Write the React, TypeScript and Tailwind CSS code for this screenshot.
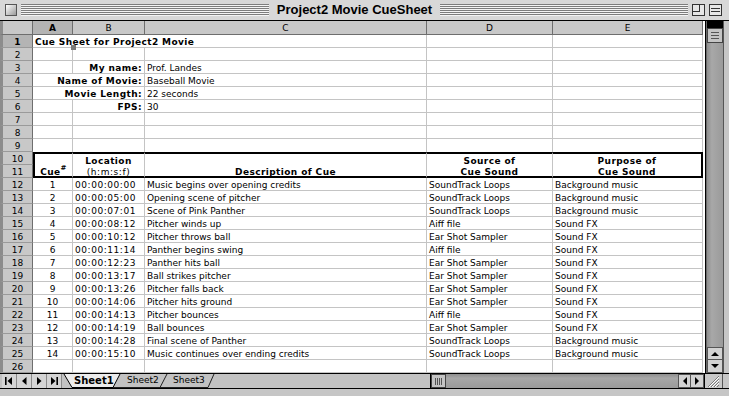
import type { ReactElement } from "react";

type Cell = { t?: string; align?: "l" | "c" | "r"; bold?: boolean; mono?: boolean };

const COL_W = ["w-[40px]", "w-[72px]", "w-[282px]", "w-[126px]", "w-[150px]"];
const COL_NAMES = ["A", "B", "C", "D", "E"];

const cues: [string, string, string, string, string][] = [
  ["1", "00:00:00:00", "Music begins over opening credits", "SoundTrack Loops", "Background music"],
  ["2", "00:00:05:00", "Opening scene of pitcher", "SoundTrack Loops", "Background music"],
  ["3", "00:00:07:01", "Scene of Pink Panther", "SoundTrack Loops", "Background music"],
  ["4", "00:00:08:12", "Pitcher winds up", "Aiff file", "Sound FX"],
  ["5", "00:00:10:12", "Pitcher throws ball", "Ear Shot Sampler", "Sound FX"],
  ["6", "00:00:11:14", "Panther begins swing", "Aiff file", "Sound FX"],
  ["7", "00:00:12:23", "Panther hits ball", "Ear Shot Sampler", "Sound FX"],
  ["8", "00:00:13:17", "Ball strikes pitcher", "Ear Shot Sampler", "Sound FX"],
  ["9", "00:00:13:26", "Pitcher falls back", "Ear Shot Sampler", "Sound FX"],
  ["10", "00:00:14:06", "Pitcher hits ground", "Ear Shot Sampler", "Sound FX"],
  ["11", "00:00:14:13", "Pitcher bounces", "Aiff file", "Sound FX"],
  ["12", "00:00:14:19", "Ball bounces", "Ear Shot Sampler", "Sound FX"],
  ["13", "00:00:14:28", "Final scene of Panther", "SoundTrack Loops", "Background music"],
  ["14", "00:00:15:10", "Music continues over ending credits", "SoundTrack Loops", "Background music"],
];

function infoRow(label: string, value: string): Cell[] {
  return [{}, { t: label, align: "r", bold: true }, { t: value }, {}, {}];
}

const rows: Cell[][] = [
  [{ t: "Cue Sheet for Project2 Movie", bold: true }, {}, {}, {}, {}],
  [{}, {}, {}, {}, {}],
  infoRow("My name:", "Prof. Landes"),
  infoRow("Name of Movie:", "Baseball Movie"),
  infoRow("Movie Length:", "22 seconds"),
  infoRow("FPS:", "30"),
  [{}, {}, {}, {}, {}],
  [{}, {}, {}, {}, {}],
  [{}, {}, {}, {}, {}],
  [
    {},
    { t: "Location", align: "c", bold: true },
    {},
    { t: "Source of", align: "c", bold: true },
    { t: "Purpose of", align: "c", bold: true },
  ],
  [
    { t: "Cue#", align: "c", bold: true },
    { t: "(h:m:s:f)", align: "c", mono: true },
    { t: "Description of Cue", align: "c", bold: true },
    { t: "Cue Sound", align: "c", bold: true },
    { t: "Cue Sound", align: "c", bold: true },
  ],
  ...cues.map((c) => [
    { t: c[0], align: "c" as const },
    { t: c[1], mono: true },
    { t: c[2] },
    { t: c[3] },
    { t: c[4] },
  ]),
  [{}, {}, {}, {}, {}],
];

function cellClass(row: number, col: number): string {
  const cls = [COL_W[col], "h-[13px] shrink-0 whitespace-nowrap px-[2px] pt-px leading-[12px] border-[#c4c4c4]"];
  // text that runs over the next cell hides the grid line between them
  const hideRight = (row === 1 && col < 2) || ((row === 4 || row === 5) && col === 0);
  if (col === 4 && (row === 10 || row === 11)) cls.push("border-r-2 border-r-black");
  else if (!hideRight) cls.push("border-r");
  if (row === 11) cls.push("border-b-2 border-b-black");
  else if (row !== 9 && row !== 10) cls.push("border-b");
  if (row === 10) cls.push("border-t-2 border-t-black");
  if (col === 0 && (row === 10 || row === 11)) cls.push("border-l-2 border-l-black");
  if (row === 1 && col === 0) cls.push("relative");
  return cls.join(" ");
}

function CellText({ c }: { c: Cell }): ReactElement | null {
  if (!c.t) return null;
  const weight = c.bold ? "font-bold tracking-[0.4px]" : c.mono ? "tracking-[0.55px]" : "";
  if (c.align === "r") {
    return (
      <div className="flex justify-end">
        <span className={"shrink-0 whitespace-nowrap " + weight}>{c.t}</span>
      </div>
    );
  }
  return (
    <div className={(c.align === "c" ? "text-center " : "text-left ") + weight}>
      {c.t === "Cue#" ? (
        <>
          Cue<sup className="text-[7px] align-[2px]">#</sup>
        </>
      ) : (
        c.t
      )}
    </div>
  );
}

function SheetRow({ cells, n }: { cells: Cell[]; n: number }): ReactElement {
  return (
    <div className="flex h-[13px]">
      <div
        className={
          n === 1
            ? "w-[33px] shrink-0 border-l-[3px] border-l-[#8c8c8c] border-r border-r-[#6e6e6e] border-b border-b-[#9a9a9a] bg-[#b4b4b4] pt-px text-center leading-[12px] font-bold"
            : "w-[33px] shrink-0 border-l-[3px] border-l-[#8c8c8c] border-r border-r-[#6e6e6e] border-b border-b-[#9a9a9a] bg-[#c8c8c8] pt-px text-center leading-[12px]"
        }
      >
        {n}
      </div>
      {cells.map((c, i) => (
        <div key={i} className={cellClass(n, i)}>
          <CellText c={c} />
          {n === 1 && i === 0 ? (
            <div className="absolute right-[-3px] bottom-[-3px] h-[5px] w-[5px] bg-[#7a7a7a]" />
          ) : null}
        </div>
      ))}
    </div>
  );
}

function Stripes(): ReactElement {
  return (
    <div className="h-[12px] flex-1 bg-[repeating-linear-gradient(to_bottom,#7d7d7d_0px,#7d7d7d_1px,#f4f4f4_1px,#f4f4f4_2px)]" />
  );
}

function Arrow({ dir }: { dir: "up" | "down" | "left" | "right" }): ReactElement {
  const pts = {
    up: "1,7 5,3 9,7",
    down: "1,3 5,7 9,3",
    left: "7,1 3,5 7,9",
    right: "3,1 7,5 3,9",
  }[dir];
  return (
    <svg width="10" height="10" viewBox="0 0 10 10">
      <polygon points={pts} fill="#000" />
    </svg>
  );
}

function NavButton({ kind }: { kind: "first" | "prev" | "next" | "last" }): ReactElement {
  return (
    <div className="flex h-[14px] w-[15px] shrink-0 items-center justify-center border-r border-[#8a8a8a] bg-[#d4d4d4]">
      <svg width="10" height="10" viewBox="0 0 10 10">
        {kind === "first" && (
          <>
            <rect x="1" y="1" width="1.6" height="8" fill="#000" />
            <polygon points="8,1 3.5,5 8,9" fill="#000" />
          </>
        )}
        {kind === "prev" && <polygon points="7.5,1 3,5 7.5,9" fill="#000" />}
        {kind === "next" && <polygon points="3,1 7.5,5 3,9" fill="#000" />}
        {kind === "last" && (
          <>
            <polygon points="2,1 6.5,5 2,9" fill="#000" />
            <rect x="7.4" y="1" width="1.6" height="8" fill="#000" />
          </>
        )}
      </svg>
    </div>
  );
}

export default function App(): ReactElement {
  return (
    <div className="flex h-[396px] w-[729px] flex-col overflow-hidden bg-[#c6c6c6] font-['DejaVu_Sans',sans-serif] text-[9px] text-black">
      {/* title bar */}
      <div className="flex h-[20px] shrink-0 items-center gap-[4px] bg-[#d8d8d8] pl-[5px] pr-[7px]">
        <div className="h-[12px] w-[12px] border border-[#555] bg-[linear-gradient(135deg,#ffffff,#9a9a9a)]" />
        <Stripes />
        <div className="px-[4px] font-['Liberation_Sans',sans-serif] text-[13px] font-bold leading-[16px]">
          Project2 Movie CueSheet
        </div>
        <Stripes />
        <div className="relative h-[12px] w-[13px] border border-[#333] bg-[#e6e6e6]">
          <div className="absolute left-0 top-0 h-[7px] w-[7px] border-b border-r border-[#333]" />
        </div>
        <div className="flex h-[12px] w-[13px] flex-col justify-center gap-[2px] border border-[#333] bg-[#e6e6e6] px-[1px]">
          <div className="h-px bg-[#333]" />
          <div className="h-px bg-[#333]" />
        </div>
      </div>

      {/* sheet + vertical scroll */}
      <div className="flex h-[353px] shrink-0 border-t border-black">
        <div className="w-[705px] shrink-0 bg-white">
          {/* column headers */}
          <div className="flex h-[14px]">
            <div className="w-[33px] shrink-0 border-l-[3px] border-l-[#8c8c8c] border-r border-r-[#6e6e6e] border-b border-b-[#6e6e6e] bg-[#c8c8c8]" />
            {COL_NAMES.map((c, i) => (
              <div
                key={c}
                className={
                  COL_W[i] +
                  (i === 0
                    ? " shrink-0 border-r border-b border-[#6e6e6e] bg-[#b4b4b4] pt-px text-center font-bold leading-[12px]"
                    : " shrink-0 border-r border-b border-[#6e6e6e] bg-[#c8c8c8] pt-px text-center leading-[12px]")
                }
              >
                {c}
              </div>
            ))}
          </div>
          {rows.map((cells, i) => (
            <SheetRow key={i} cells={cells} n={i + 1} />
          ))}
        </div>
        <div className="w-px shrink-0 bg-black" />
        {/* vertical scrollbar */}
        <div className="flex w-[17px] shrink-0 flex-col border-l border-[#6a6a6a] bg-[#9c9c9c]">
          <div className="h-[7px] bg-black" />
          <div className="flex h-[15px] flex-col justify-center gap-[2px] border border-[#444] bg-[#c4c4c4] px-[3px]">
            <div className="h-px bg-[#555]" />
            <div className="h-px bg-[#555]" />
            <div className="h-px bg-[#555]" />
          </div>
          <div className="flex-1 bg-[linear-gradient(to_right,#8f8f8f,#a8a8a8_30%,#9a9a9a)]" />
          <div className="flex h-[13px] items-center justify-center border border-[#555] bg-[#d2d2d2]">
            <Arrow dir="up" />
          </div>
          <div className="flex h-[13px] items-center justify-center border border-t-0 border-[#555] bg-[#d2d2d2]">
            <Arrow dir="down" />
          </div>
        </div>
        <div className="flex-1 border-l border-[#555] bg-[#c6c6c6]" />
      </div>

      {/* sheet tabs + horizontal scroll */}
      <div className="flex h-[15px] shrink-0 border-t border-black">
        <div className="relative flex w-[430px] shrink-0 items-start bg-[#c2c2c2] pl-[2px]">
          <NavButton kind="first" />
          <NavButton kind="prev" />
          <NavButton kind="next" />
          <NavButton kind="last" />
          <svg className="absolute left-[62px] top-0" width="160" height="14" viewBox="0 0 160 14">
            <polygon points="2,0 10,13.5 51,13.5 58,0" fill="#ececec" />
            <polyline points="2,0 10,13.5 51,13.5 58,0" fill="none" stroke="#000" strokeWidth="1" />
            <polyline points="51,13.5 98,13.5 105,0" fill="none" stroke="#222" strokeWidth="1" />
            <polyline points="98,13.5 146,13.5 152,0" fill="none" stroke="#222" strokeWidth="1" />
          </svg>
          <div className="relative ml-[12px] w-[39px] text-left text-[10px] font-bold leading-[13px]">Sheet1</div>
          <div className="relative ml-[14px] w-[30px] text-left leading-[13px]">Sheet2</div>
          <div className="relative ml-[16px] w-[30px] text-left leading-[13px]">Sheet3</div>
        </div>
        <div className="flex w-[274px] shrink-0 border-l border-black bg-[#9c9c9c]">
          <div className="flex w-[15px] items-center justify-center gap-[1px] border border-[#444] bg-[#c4c4c4]">
            <div className="h-[7px] w-px bg-[#555]" />
            <div className="h-[7px] w-px bg-[#555]" />
            <div className="h-[7px] w-px bg-[#555]" />
            <div className="h-[7px] w-px bg-[#555]" />
          </div>
          <div className="flex-1 bg-[linear-gradient(to_bottom,#8f8f8f,#a8a8a8_30%,#9a9a9a)]" />
          <div className="flex w-[13px] items-center justify-center border border-[#555] bg-[#d2d2d2]">
            <Arrow dir="left" />
          </div>
          <div className="flex w-[13px] items-center justify-center border border-l-0 border-[#555] bg-[#d2d2d2]">
            <Arrow dir="right" />
          </div>
        </div>
        <div className="w-px shrink-0 bg-black" />
        <div className="flex w-[17px] shrink-0 items-center justify-center bg-[#c8c8c8]">
          <svg width="13" height="13" viewBox="0 0 13 13">
            <path d="M12 4 L4 12 M12 7 L7 12 M12 10 L10 12 M12 1 L1 12" stroke="#7a7a7a" strokeWidth="1" />
            <path d="M12 5 L5 12 M12 8 L8 12 M12 2 L2 12" stroke="#fff" strokeWidth="1" />
          </svg>
        </div>
        <div className="flex-1 border-l border-[#555] bg-[#c6c6c6]" />
      </div>
      <div className="flex-1 border-t border-black bg-[#c6c6c6]" />
    </div>
  );
}
